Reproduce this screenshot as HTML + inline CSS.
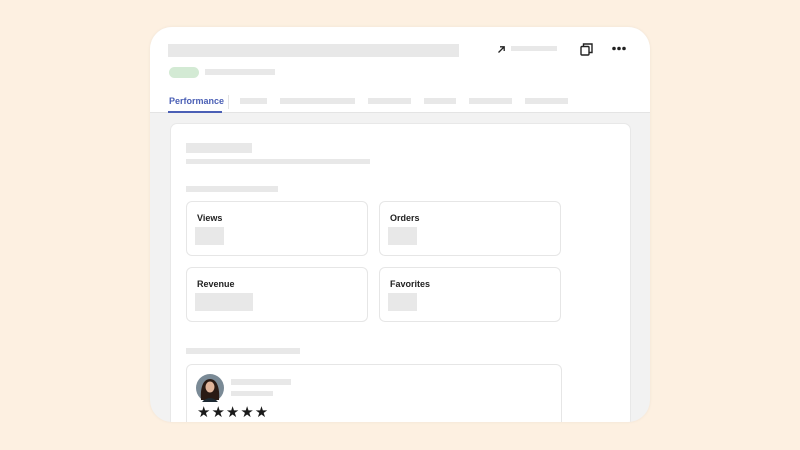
<!DOCTYPE html>
<html><head><meta charset="utf-8"><style>
*{margin:0;padding:0;box-sizing:border-box}
body{width:800px;height:450px;background:#fdf0e1;position:relative;overflow:hidden;font-family:"Liberation Sans",sans-serif}
.a{position:absolute}
.g{position:absolute;background:#e8e8e8}
.frame{position:absolute;left:150px;top:27px;width:500px;height:395px;background:#f2f2f2;border-radius:22px;overflow:hidden;box-shadow:0 0 3px rgba(0,0,0,.06)}
.box{position:absolute;width:182px;height:55px;border:1px solid #e6e6e6;border-radius:6px;background:#fff}
.lbl{position:absolute;left:10px;top:11px;font-size:9px;font-weight:bold;color:#222}
</style></head><body>
<div class="frame">
  <div class="a" style="left:0;top:0;width:500px;height:86px;background:#fff;border-bottom:1px solid #e4e4e4"></div>
  <div class="g" style="left:18px;top:17px;width:291px;height:13px"></div>
  <svg class="a" style="left:347px;top:18px" width="9" height="9" viewBox="0 0 9 9"><path d="M1.5 7.5L7 2M3 1.8H7.2V6" stroke="#222" stroke-width="1.3" fill="none"/></svg>
  <div class="g" style="left:361px;top:19px;width:46px;height:5px"></div>
  <svg class="a" style="left:430px;top:16px" width="13" height="13" viewBox="0 0 13 13"><rect x="1" y="3.5" width="8" height="8.5" rx="1" stroke="#222" stroke-width="1.4" fill="#fff"/><path d="M3.5 3.2V1H12V9.5H9.3" stroke="#222" stroke-width="1.4" fill="none"/></svg>
  <svg class="a" style="left:462px;top:19px" width="14" height="5" viewBox="0 0 14 5"><circle cx="2" cy="2.5" r="1.8" fill="#222"/><circle cx="7" cy="2.5" r="1.8" fill="#222"/><circle cx="12" cy="2.5" r="1.8" fill="#222"/></svg>
  <div class="a" style="left:19px;top:69px;font-size:9px;font-weight:bold;color:#4a5fb5">Performance</div>
  <div class="a" style="left:19px;top:40px;width:30px;height:11px;border-radius:6px;background:#d3ead4"></div>
  <div class="g" style="left:55px;top:42px;width:70px;height:6px"></div>
  <div class="a" style="left:18px;top:84px;width:54px;height:2px;background:#4a5fb5"></div>
  <div class="a" style="left:78px;top:68px;width:1px;height:14px;background:#e4e4e4"></div>
  <div class="g" style="left:90px;top:71px;width:27px;height:6px"></div>
  <div class="g" style="left:130px;top:71px;width:75px;height:6px"></div>
  <div class="g" style="left:218px;top:71px;width:43px;height:6px"></div>
  <div class="g" style="left:274px;top:71px;width:32px;height:6px"></div>
  <div class="g" style="left:319px;top:71px;width:43px;height:6px"></div>
  <div class="g" style="left:375px;top:71px;width:43px;height:6px"></div>
  <div class="a" style="left:20px;top:96px;width:461px;height:320px;background:#fff;border:1px solid #e8e8e8;border-radius:7px">
    <div class="g" style="left:15px;top:19px;width:66px;height:10px"></div>
    <div class="g" style="left:15px;top:35px;width:184px;height:5px"></div>
    <div class="g" style="left:15px;top:62px;width:92px;height:6px"></div>
    <div class="box" style="left:15px;top:77px"><div class="lbl">Views</div><div class="g" style="left:8px;top:25px;width:29px;height:18px"></div></div>
    <div class="box" style="left:208px;top:77px"><div class="lbl">Orders</div><div class="g" style="left:8px;top:25px;width:29px;height:18px"></div></div>
    <div class="box" style="left:15px;top:143px"><div class="lbl">Revenue</div><div class="g" style="left:8px;top:25px;width:58px;height:18px"></div></div>
    <div class="box" style="left:208px;top:143px"><div class="lbl">Favorites</div><div class="g" style="left:8px;top:25px;width:29px;height:18px"></div></div>
    <div class="g" style="left:15px;top:224px;width:114px;height:6px"></div>
    <div class="a" style="left:15px;top:240px;width:376px;height:80px;border:1px solid #e6e6e6;border-radius:6px">
      <svg class="a" style="left:9px;top:9px" width="28" height="28" viewBox="0 0 28 28"><circle cx="14" cy="14" r="14" fill="#7a8a96"/><path d="M5 26C4 14 7 5 14 5S24 14 23 26Z" fill="#2a1a14"/><ellipse cx="14" cy="13" rx="4.5" ry="5.5" fill="#e0b49a"/><path d="M6 28Q14 20 22 28Z" fill="#1e2a33"/></svg>
      <div class="g" style="left:44px;top:14px;width:60px;height:6px"></div>
      <div class="g" style="left:44px;top:26px;width:42px;height:5px"></div>
      <div class="a" style="left:10px;top:38px;font-size:15px;color:#1a1a1a;letter-spacing:1px;font-family:'DejaVu Sans',sans-serif">★★★★★</div>
    </div>
  </div>
</div>
</body></html>
